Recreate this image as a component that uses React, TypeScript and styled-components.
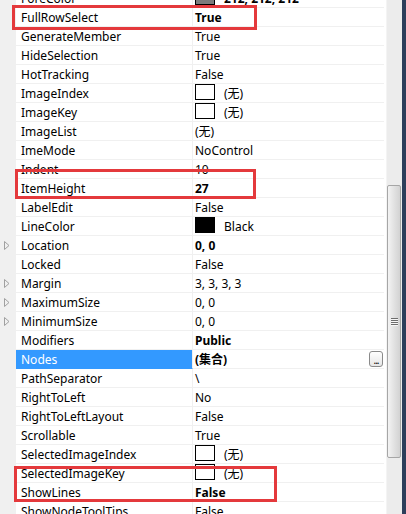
import React from "react";
import styled, { createGlobalStyle } from "styled-components";

const GlobalStyle = createGlobalStyle`
  html, body {
    margin: 0;
    padding: 0;
    background: #ffffff;
  }
  body {
    font-family: "Noto Sans", "Noto Sans CJK SC", sans-serif;
    font-size: 12px;
    color: #000;
  }
`;

type Prop = {
  name: string;
  value: string;
  bold?: boolean;
  swatch?: string;
  expandable?: boolean;
  selected?: boolean;
  ellipsis?: boolean;
};

const props: Prop[] = [
  { name: "ForeColor", value: "212, 212, 212", bold: true, swatch: "#7c7c7c" },
  { name: "FullRowSelect", value: "True", bold: true },
  { name: "GenerateMember", value: "True" },
  { name: "HideSelection", value: "True" },
  { name: "HotTracking", value: "False" },
  { name: "ImageIndex", value: "(无)", swatch: "#fff" },
  { name: "ImageKey", value: "(无)", swatch: "#fff" },
  { name: "ImageList", value: "(无)" },
  { name: "ImeMode", value: "NoControl" },
  { name: "Indent", value: "10" },
  { name: "ItemHeight", value: "27", bold: true },
  { name: "LabelEdit", value: "False" },
  { name: "LineColor", value: "Black", swatch: "#000" },
  { name: "Location", value: "0, 0", bold: true, expandable: true },
  { name: "Locked", value: "False" },
  { name: "Margin", value: "3, 3, 3, 3", expandable: true },
  { name: "MaximumSize", value: "0, 0", expandable: true },
  { name: "MinimumSize", value: "0, 0", expandable: true },
  { name: "Modifiers", value: "Public", bold: true },
  { name: "Nodes", value: "(集合)", bold: true, selected: true, ellipsis: true },
  { name: "PathSeparator", value: "\\" },
  { name: "RightToLeft", value: "No" },
  { name: "RightToLeftLayout", value: "False" },
  { name: "Scrollable", value: "True" },
  { name: "SelectedImageIndex", value: "(无)", swatch: "#fff" },
  { name: "SelectedImageKey", value: "(无)", swatch: "#fff" },
  { name: "ShowLines", value: "False", bold: true },
  { name: "ShowNodeToolTips", value: "False" },
];

// 주석 박스 (빨간 테두리)
const marks = [
  { left: 12, top: 5, width: 245, height: 25 },
  { left: 15, top: 169, width: 241, height: 30 },
  { left: 14, top: 466, width: 263, height: 36 },
];

const Window = styled.div`
  position: relative;
  width: 406px;
  height: 514px;
  overflow: hidden;
  display: flex;
  background: #fff;
`;

const Grid = styled.div`
  flex: 1;
  padding-right: 2px;
  background: #fff;
`;

const List = styled.div`
  margin-top: -11px;
  display: flex;
  flex-direction: column;
`;

const Row = styled.div`
  display: flex;
  height: 19px;
`;

const Gutter = styled.div`
  width: 16px;
  flex: none;
  background: #f0f0f0;
  display: flex;
  align-items: center;
  padding-left: 4px;
  box-sizing: border-box;
`;

const NameCell = styled.div<{ $selected?: boolean }>`
  width: 177px;
  flex: none;
  box-sizing: border-box;
  padding-left: 5px;
  display: flex;
  align-items: center;
  white-space: nowrap;
  overflow: hidden;
  border-right: 1px solid #f0f0f0;
  border-bottom: 1px solid ${(p) => (p.$selected ? "#3399ff" : "#f0f0f0")};
  background: ${(p) => (p.$selected ? "#3399ff" : "#fff")};
  color: ${(p) => (p.$selected ? "#fff" : "#000")};
`;

const ValueCell = styled.div<{ $bold?: boolean }>`
  flex: 1;
  box-sizing: border-box;
  padding-left: 2px;
  display: flex;
  align-items: center;
  white-space: nowrap;
  border-bottom: 1px solid #f0f0f0;
  font-weight: ${(p) => (p.$bold ? 700 : 400)};
`;

const Swatch = styled.span<{ $color: string }>`
  width: 20px;
  height: 16px;
  box-sizing: border-box;
  align-self: flex-start;
  border: 1px solid #000;
  background: ${(p) => p.$color};
  margin-right: 9px;
  flex: none;
`;

const Value = styled.span`
  flex: 1;
`;

const EllipsisButton = styled.span`
  width: 14px;
  height: 16px;
  box-sizing: border-box;
  margin-right: 1px;
  border: 1px solid #8a8a8a;
  border-radius: 3px;
  background: linear-gradient(#ffffff, #e6e6e6);
  font-weight: 400;
  font-size: 10px;
  line-height: 16px;
  text-align: center;
  letter-spacing: -1px;
  color: #000;
`;

const ScrollBar = styled.div`
  width: 16px;
  flex: none;
  background: #ececec;
  border-left: 1px solid #f4f4f4;
  box-sizing: border-box;
  display: flex;
  flex-direction: column;
  padding-top: 185px;
`;

const Thumb = styled.div`
  height: 273px;
  margin: 0 1px 0 0;
  box-sizing: border-box;
  border: 1px solid #a6a6a6;
  border-radius: 2px;
  background: linear-gradient(to right, #f3f3f3, #e2e2e2 50%, #d2d2d2);
  display: flex;
  align-items: center;
  justify-content: center;
`;

const Grip = styled.div`
  width: 7px;
  height: 8px;
  background: repeating-linear-gradient(
    to bottom,
    #6d6d6d 0,
    #6d6d6d 1px,
    #f6f6f6 1px,
    #f6f6f6 2px
  );
`;

const Frame = styled.div`
  width: 4px;
  flex: none;
  background: #2d3e5b;
`;

const Mark = styled.div`
  position: absolute;
  box-sizing: border-box;
  border: 3px solid #e4393c;
  pointer-events: none;
`;

const Expander = () => (
  <svg width="6" height="9" viewBox="0 0 6 9">
    <path d="M0.5 0.5 L5 4.5 L0.5 8.5 Z" fill="none" stroke="#a0a0a0" strokeWidth="1" />
  </svg>
);

const App = () => {
  return (
    <>
      <GlobalStyle />
      <Window>
        <Grid>
          <List>
            {props.map((item) => (
              <Row key={item.name}>
                <Gutter>{item.expandable && <Expander />}</Gutter>
                <NameCell $selected={item.selected}>{item.name}</NameCell>
                <ValueCell $bold={item.bold}>
                  {item.swatch && <Swatch $color={item.swatch} />}
                  <Value>{item.value}</Value>
                  {item.ellipsis && <EllipsisButton>...</EllipsisButton>}
                </ValueCell>
              </Row>
            ))}
          </List>
        </Grid>
        <ScrollBar>
          <Thumb>
            <Grip />
          </Thumb>
        </ScrollBar>
        <Frame />
        {marks.map((m, i) => (
          <Mark key={i} style={{ left: m.left, top: m.top, width: m.width, height: m.height }} />
        ))}
      </Window>
    </>
  );
};

export default App;
